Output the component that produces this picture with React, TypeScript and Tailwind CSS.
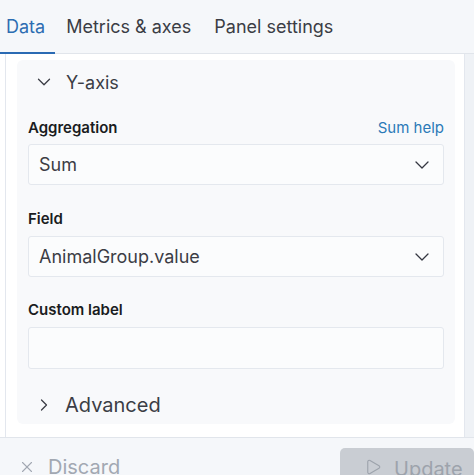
import { ChevronDown, ChevronRight, X, Play } from "lucide-react";

const FONT = { fontFamily: "Inter, 'Noto Sans', sans-serif" };

function Select({ value }: { value: string }) {
  return (
    <div className="h-[41px] flex items-center justify-between pl-[10px] pr-[9px] bg-[#fbfcfd] border border-[#e4e8ee] rounded-[3px] text-[18px] text-[#3b3d45]">
      <span>{value}</span>
      <ChevronDown size={24} strokeWidth={1.3} className="text-[#343741]" />
    </div>
  );
}

export default function App() {
  return (
    <div className="w-[474px] h-[475px] overflow-hidden flex flex-col bg-white" style={FONT}>
      {/* Tabs */}
      <div className="h-[54px] shrink-0 flex items-end bg-[#f5f7fa] border-b border-[#e1e5eb]">
        <div className="pl-[6px] pr-[10px] h-[53px] flex items-center text-[18px] text-[#2d6db2] border-b-[2px] border-[#2a6ab3] mb-[-1px]">
          Data
        </div>
        <div className="px-[11px] h-[53px] flex items-center text-[18px] text-[#3b3d45]">Metrics &amp; axes</div>
        <div className="px-[12px] h-[53px] flex items-center text-[18px] text-[#3b3d45]">Panel settings</div>
      </div>

      {/* Body */}
      <div className="flex-1 flex min-h-0">
        <div className="w-[5px] bg-white" />
        <div className="w-[460px] border-l border-r border-[#e3e7ee] bg-white pl-[11px] pr-[9px] pt-[6px] pb-[12px]">
          <div className="bg-[#f8f9fb] rounded-[6px] px-[11px] pb-[1px]">
            <div className="h-[44px] flex items-center pl-[5px] gap-[11px] text-[18px] text-[#3b3d45]">
              <ChevronDown size={22} strokeWidth={1.4} />
              <span>Y-axis</span>
            </div>

            <div className="mt-[14px] flex items-center justify-between h-[20px]">
              <span className="text-[15px] font-semibold text-[#1a1c21]">Aggregation</span>
              <span className="text-[15px] text-[#2b7ab8]">Sum help</span>
            </div>
            <div className="mt-[6px]">
              <Select value="Sum" />
            </div>

            <div className="mt-[24px] h-[20px] flex items-center">
              <span className="text-[15px] font-semibold text-[#1a1c21]">Field</span>
            </div>
            <div className="mt-[7px]">
              <Select value="AnimalGroup.value" />
            </div>

            <div className="mt-[23px] h-[20px] flex items-center">
              <span className="text-[15px] font-semibold text-[#1a1c21]">Custom label</span>
            </div>
            <div className="mt-[7px] h-[42px] bg-[#fbfcfd] border border-[#e4e8ee] rounded-[3px]" />

            <div className="mt-[18px] h-[36px] flex items-center pl-[6px] gap-[11px] text-[20px] text-[#3b3d45]">
              <ChevronRight size={20} strokeWidth={1.5} />
              <span>Advanced</span>
            </div>
          </div>
        </div>
        <div className="flex-1 bg-[#eff2f6]" />
      </div>

      {/* Footer */}
      <div className="h-[38px] shrink-0 flex items-start justify-between bg-[#f5f7fa] border-t border-[#e1e5eb]">
        <div className="flex items-center gap-[12px] pl-[18px] pt-[14px] text-[20px] text-[#a2a8b2]">
          <X size={18} strokeWidth={1.5} />
          <span>Discard</span>
        </div>
        <div className="mt-[10px] w-[134px] h-[40px] rounded-[5px] bg-[#c9cdd3] flex items-start gap-[12px] pl-[24px] pt-[6px] text-[20px] text-[#9da3ac]">
          <Play size={18} strokeWidth={1.5} className="mt-[4px]" />
          <span>Update</span>
        </div>
      </div>
    </div>
  );
}
